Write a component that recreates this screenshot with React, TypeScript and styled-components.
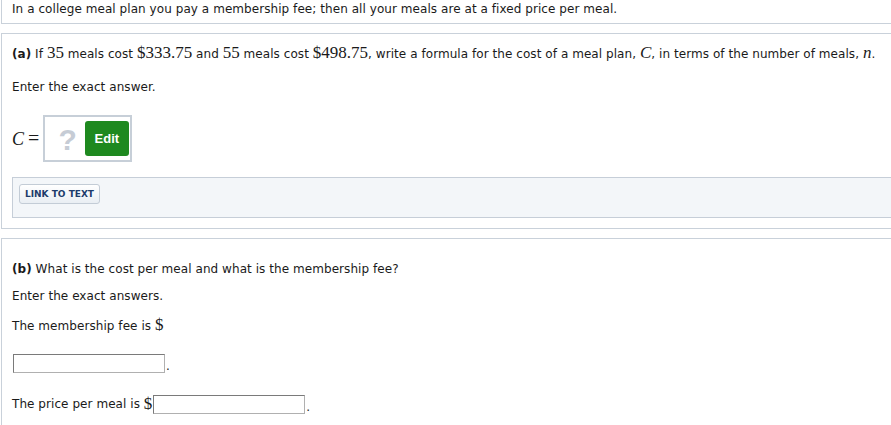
import React from "react";
import styled, { createGlobalStyle } from "styled-components";

const Global = createGlobalStyle`
  html, body { margin: 0; padding: 0; background: #ffffff; overflow: hidden; }
  body { font-family: "DejaVu Sans", Verdana, sans-serif; font-size: 12px; color: #1a1a1a; letter-spacing: 0.06px; }
`;

const Page = styled.div`
  width: 940px;
  margin-top: -12px;
  display: flex;
  flex-direction: column;
  gap: 9px;
`;

const Panel = styled.section<{ $pt?: number; $pb?: number }>`
  margin-left: 1px;
  border: 1px solid #c9d1da;
  background: #ffffff;
  padding: ${(p) => p.$pt ?? 10}px 10px ${(p) => p.$pb ?? 10}px 10px;
  display: flex;
  flex-direction: column;
  align-items: flex-start;
`;

const Line = styled.div<{ $mt?: number }>`
  line-height: 20px;
  margin-top: ${(p) => p.$mt ?? 0}px;
  white-space: nowrap;
`;

const Bold = styled.b`
  font-weight: bold;
`;

const M = styled.span<{ $i?: boolean }>`
  font-family: "Liberation Serif", "Times New Roman", serif;
  font-size: 17px;
  letter-spacing: 0;
  font-style: ${(p) => (p.$i ? "italic" : "normal")};
`;

const AnswerRow = styled.div`
  margin-top: 18px;
  display: flex;
  align-items: center;
  gap: 4px;
`;

const Eq = styled.span`
  font-family: "Liberation Serif", "Times New Roman", serif;
  font-size: 18px;
  display: flex;
  gap: 4px;
  padding-top: 2px;
`;

const EqSign = styled.span`
  font-size: 20px;
  line-height: 18px;
`;

const AnswerBox = styled.div`
  box-sizing: border-box;
  width: 89px;
  height: 47px;
  border: 2px solid #c7cfd8;
  display: flex;
  align-items: center;
  padding-left: 13px;
  gap: 8px;
`;

const Question = styled.span`
  font-family: "Liberation Sans", Arial, sans-serif;
  font-weight: bold;
  font-size: 30px;
  color: #c6ccd5;
  line-height: 1;
  padding-top: 2px;
`;

const EditButton = styled.button`
  width: 44px;
  height: 35px;
  border: none;
  border-radius: 3px;
  background: #1e891f;
  color: #ffffff;
  font-family: "Liberation Sans", Arial, sans-serif;
  font-weight: bold;
  font-size: 13px;
  padding: 0;
`;

const LinkArea = styled.div`
  margin-top: 15px;
  align-self: stretch;
  box-sizing: border-box;
  height: 41px;
  border: 1px solid #c6ced8;
  background: #f3f6f9;
  padding: 6px 6px;
`;

const LinkButton = styled.button`
  height: 20px;
  padding: 0 5px;
  border: 1px solid #c3ccd6;
  border-radius: 3px;
  background: linear-gradient(#ffffff, #e9eef3);
  color: #1d3c6b;
  font-family: "DejaVu Sans", Verdana, sans-serif;
  font-weight: bold;
  font-size: 9px;
`;

const FieldRow = styled.div<{ $mt?: number }>`
  margin-top: ${(p) => p.$mt ?? 0}px;
  display: flex;
  align-items: center;
  white-space: nowrap;
`;

const Input = styled.input`
  width: 152px;
  height: 19px;
  box-sizing: border-box;
  margin: 0 0 0 1px;
  border: 1px solid #7a7a7a;
  border-right-color: #b0b0b0;
  border-bottom-color: #b0b0b0;
  background: #ffffff;
  padding: 0;
`;

const Dot = styled.span`
  align-self: flex-end;
  font-size: 12px;
  line-height: 14px;
  margin-left: 1px;
`;

export default function App() {
  return (
    <>
      <Global />
      <Page>
        <Panel $pt={10} $pb={4}>
          <Line>
            In a college meal plan you pay a membership fee; then all your meals are at a fixed price per meal.
          </Line>
        </Panel>
        <Panel $pt={9} $pb={10}>
          <Line>
            <Bold>(a)</Bold> If <M>35</M> meals cost <M>$333.75</M> and <M>55</M> meals cost{" "}
            <M>$498.75</M>, write a formula for the cost of a meal plan, <M $i>C</M>, in terms of the
            number of meals, <M $i>n</M>.
          </Line>
          <Line $mt={13}>Enter the exact answer.</Line>
          <AnswerRow>
            <Eq>
              <i>C</i>
              <EqSign>=</EqSign>
            </Eq>
            <AnswerBox>
              <Question>?</Question>
              <EditButton>Edit</EditButton>
            </AnswerBox>
          </AnswerRow>
          <LinkArea>
            <LinkButton>LINK TO TEXT</LinkButton>
          </LinkArea>
        </Panel>
        <Panel $pt={20} $pb={20}>
          <Line>
            <Bold>(b)</Bold> What is the cost per meal and what is the membership fee?
          </Line>
          <Line $mt={7}>Enter the exact answers.</Line>
          <Line $mt={9}>
            The membership fee is <M>$</M>
          </Line>
          <FieldRow $mt={18}>
            <Input />
            <Dot>.</Dot>
          </FieldRow>
          <FieldRow $mt={21}>
            The price per meal is&nbsp;<M>$</M>
            <Input />
            <Dot>.</Dot>
          </FieldRow>
        </Panel>
      </Page>
    </>
  );
}
